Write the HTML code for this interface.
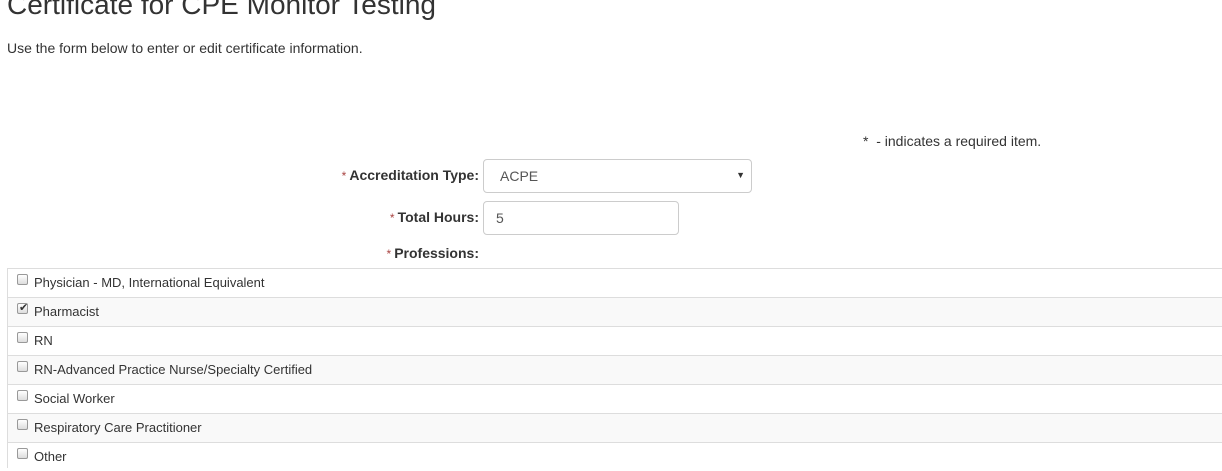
<!DOCTYPE html>
<html><head><style>
body{margin:0;width:1222px;height:463px;overflow:hidden;font-family:"Liberation Sans",Arial,sans-serif;color:#333;background:#fff;position:relative}
.abs{position:absolute}
h1{position:absolute;left:7px;top:-11px;margin:0;font-size:28px;font-weight:normal;white-space:nowrap}
.sub{left:7px;top:40px;font-size:14px}
.req{left:863px;top:133px;font-size:14px}
.lbl{right:743px;font-size:14px;font-weight:bold;text-align:right;white-space:nowrap}
.lbl i{color:#a94442;font-style:normal;font-weight:normal;font-size:12px;margin-right:3px}
.box{border:1px solid #ccc;border-radius:4px;background:#fff;font-size:14px;color:#555;box-sizing:border-box}
.row{left:7px;width:1220px;height:29px;border-top:1px solid #ddd;box-sizing:border-box;font-size:13px}
.row span{position:absolute;left:27px;top:6px}
.cb{position:absolute;left:10px;top:5px;width:11px;height:11px;border:1px solid #999;border-radius:2px;background:linear-gradient(#fff,#ddd);box-sizing:border-box}
.alt{background:#f9f9f9}
.brd{left:7px;top:268px;width:1px;height:200px;background:#ddd}
</style></head><body>
<h1>Certificate for CPE Monitor Testing</h1>
<div class="abs sub">Use the form below to enter or edit certificate information.</div>
<div class="abs req">* &nbsp;- indicates a required item.</div>
<div class="abs lbl" style="top:167px"><i>*</i>Accreditation Type:</div>
<div class="abs box" style="left:483px;top:159px;width:269px;height:34px;padding:8px 16px">ACPE<span style="position:absolute;right:6px;top:10px;font-size:9px;color:#333">▼</span></div>
<div class="abs lbl" style="top:209px"><i>*</i>Total Hours:</div>
<div class="abs box" style="left:483px;top:201px;width:196px;height:34px;padding:8px 12px">5</div>
<div class="abs lbl" style="top:245px"><i>*</i>Professions:</div>
<div class="abs row" style="top:268px"><div class="cb"></div><span>Physician - MD, International Equivalent</span></div>
<div class="abs row alt" style="top:297px"><div class="cb"></div><div style="position:absolute;left:12px;top:3px;font-size:11px;color:#333">✔</div><span>Pharmacist</span></div>
<div class="abs row" style="top:326px"><div class="cb"></div><span>RN</span></div>
<div class="abs row alt" style="top:355px"><div class="cb"></div><span>RN-Advanced Practice Nurse/Specialty Certified</span></div>
<div class="abs row" style="top:384px"><div class="cb"></div><span>Social Worker</span></div>
<div class="abs row alt" style="top:413px"><div class="cb"></div><span>Respiratory Care Practitioner</span></div>
<div class="abs row" style="top:442px"><div class="cb"></div><span>Other</span></div>
<div class="abs brd"></div>
</body></html>
